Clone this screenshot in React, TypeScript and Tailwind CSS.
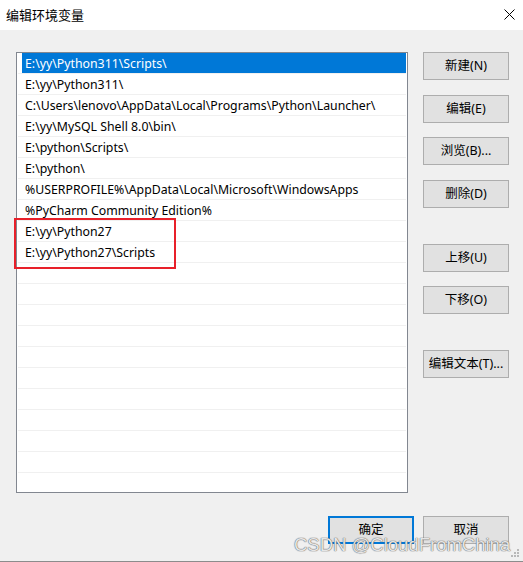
const paths = [
  'E:\\yy\\Python311\\Scripts\\',
  'E:\\yy\\Python311\\',
  'C:\\Users\\lenovo\\AppData\\Local\\Programs\\Python\\Launcher\\',
  'E:\\yy\\MySQL Shell 8.0\\bin\\',
  'E:\\python\\Scripts\\',
  'E:\\python\\',
  '%USERPROFILE%\\AppData\\Local\\Microsoft\\WindowsApps',
  '%PyCharm Community Edition%',
  'E:\\yy\\Python27',
  'E:\\yy\\Python27\\Scripts'
]

const rows = [...paths, ...Array(10).fill('')]

const Btn = ({ label, className = '' }: { label: string; className?: string }) => (
  <button
    className={`w-[86px] h-[28px] bg-[#e1e1e1] border border-[#adadad] text-[12.5px] text-black flex items-center justify-center ${className}`}
  >
    {label}
  </button>
)

export default function App() {
  return (
    <div className="relative w-[523px] h-[562px] bg-[#f0f0f0] overflow-hidden flex flex-col border-b border-[#8c8c8c] font-['Noto_Sans','Noto_Sans_CJK_SC',sans-serif]">
      {/* title bar */}
      <div className="h-[30px] bg-white flex items-center justify-between pl-[6px] pr-[8px] shrink-0">
        <span className="text-[13px] text-black font-['Noto_Sans_CJK_SC',sans-serif]">编辑环境变量</span>
        <svg width="11" height="11" viewBox="0 0 11 11" className="mb-[2px]">
          <path d="M0.5 0.5 L10.5 10.5 M10.5 0.5 L0.5 10.5" stroke="#000" strokeWidth="1" />
        </svg>
      </div>

      <div className="flex pl-[16px] pt-[22px]">
        {/* list */}
        <div className="w-[392px] h-[441px] border border-[#828790] bg-white px-[1px]">
          {rows.map((p, i) => (
            <div key={i} className="h-[21px] border-b border-[#f0f0f0] text-[12.3px] text-black">
              {i === 0 ? (
                <div className="ml-[4px] h-[20px] bg-[#0078d7] text-white pl-[3px] leading-[21px]">{p}</div>
              ) : (
                <div className="pl-[7px] leading-[21px] whitespace-nowrap">{p}</div>
              )}
            </div>
          ))}
        </div>

        {/* right buttons */}
        <div className="flex flex-col ml-[15px]">
          <Btn label="新建(N)" />
          <Btn label="编辑(E)" className="mt-[15px]" />
          <Btn label="浏览(B)..." className="mt-[14px]" />
          <Btn label="删除(D)" className="mt-[15px]" />
          <Btn label="上移(U)" className="mt-[36px]" />
          <Btn label="下移(O)" className="mt-[14px]" />
          <Btn label="编辑文本(T)..." className="mt-[36px]" />
        </div>
      </div>

      {/* bottom buttons */}
      <div className="flex justify-end gap-[9px] pr-[14px] mt-[23px]">
        <button className="w-[86px] h-[28px] bg-[#e1e1e1] border-2 border-[#0078d7] text-[12.5px] text-black flex items-center justify-center">
          确定
        </button>
        <Btn label="取消" />
      </div>

      {/* annotation box */}
      <div className="absolute left-[14px] top-[218px] w-[162px] h-[51px] border-2 border-[#e8202a]" />

      {/* watermark */}
      <div className="absolute left-[294px] top-[534px] text-[18.5px] leading-[22px] text-white/85 font-['Liberation_Sans',sans-serif] [text-shadow:0_0_1px_#555,0_0_1px_#555]">
        CSDN @CloudFromChina
      </div>

      {/* size grip */}
      <svg className="absolute right-[3px] bottom-[3px]" width="9" height="9" viewBox="0 0 9 9">
        <rect x="6" y="0" width="2" height="2" fill="#b8b8b8" />
        <rect x="3" y="3" width="2" height="2" fill="#b8b8b8" />
        <rect x="6" y="3" width="2" height="2" fill="#b8b8b8" />
        <rect x="0" y="6" width="2" height="2" fill="#b8b8b8" />
        <rect x="3" y="6" width="2" height="2" fill="#b8b8b8" />
        <rect x="6" y="6" width="2" height="2" fill="#b8b8b8" />
      </svg>
    </div>
  )
}
